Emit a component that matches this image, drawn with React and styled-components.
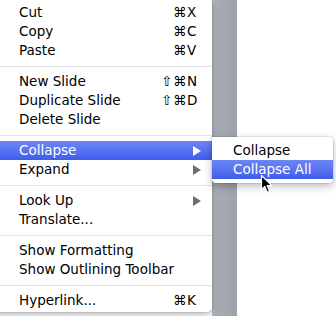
import React from 'react';
import styled, { createGlobalStyle } from 'styled-components';

const GlobalStyle = createGlobalStyle`
  html, body {
    margin: 0;
    padding: 0;
    background: #ffffff;
  }
  body {
    font-family: "DejaVu Sans", "Noto Sans", sans-serif;
  }
`;

const Screen = styled.div`
  position: relative;
  width: 336px;
  height: 316px;
  overflow: hidden;
  display: flex;
  background: #ffffff;
`;

const WindowArea = styled.div`
  flex: 0 0 212px;
  background: #ffffff;
`;

const WindowEdge = styled.div`
  flex: 0 0 25px;
  background: linear-gradient(90deg, #b5b9c1 0%, #a6aab2 30%, #9ea2ab 100%);
`;

const Desk = styled.div`
  flex: 1;
  background: #ffffff;
`;

const Menu = styled.div`
  position: absolute;
  left: ${(p) => p.$left}px;
  top: ${(p) => p.$top}px;
  width: ${(p) => p.$width}px;
  padding: 4px 0 ${(p) => p.$bottom}px;
  background: #ffffff;
  border-radius: ${(p) => p.$radius};
  box-shadow: 0 3px 8px rgba(0, 0, 0, 0.28), 0 0 0 1px rgba(0, 0, 0, 0.08);
  font-size: 13.5px;
  color: #000000;
  z-index: ${(p) => p.$z};
`;

const Row = styled.div`
  display: flex;
  align-items: center;
  height: 19px;
  line-height: 19px;
  padding: 0 ${(p) => p.$right}px 0 ${(p) => p.$left}px;
  color: ${(p) => (p.$active ? '#ffffff' : '#000000')};
  background: ${(p) =>
    p.$active ? 'linear-gradient(180deg, #6c85f5 0%, #5a75f1 45%, #3e5cea 100%)' : 'transparent'};
  white-space: nowrap;
`;

const Label = styled.span`
  flex: 1;
`;

const Shortcut = styled.span`
  display: flex;
  align-items: center;
`;

const Modifiers = styled.span`
  letter-spacing: 0.5px;
`;

const Key = styled.span`
  display: inline-block;
  width: 11px;
  text-align: left;
`;

const Arrow = styled.span`
  width: 0;
  height: 0;
  margin-right: -3px;
  border-top: 5px solid transparent;
  border-bottom: 5px solid transparent;
  border-left: 8px solid ${(p) => (p.$active ? '#ffffff' : '#6e6e6e')};
`;

const Separator = styled.div`
  height: 12px;
  display: flex;
  align-items: center;
  &::after {
    content: '';
    flex: 1;
    height: 1px;
    background: #e2e2e2;
  }
`;

const Cursor = styled.svg`
  position: absolute;
  left: 260px;
  top: 174px;
  z-index: 5;
`;

const mainItems = [
  { label: 'Cut', mods: '⌘', key: 'X' },
  { label: 'Copy', mods: '⌘', key: 'C' },
  { label: 'Paste', mods: '⌘', key: 'V' },
  { sep: true },
  { label: 'New Slide', mods: '⇧⌘', key: 'N' },
  { label: 'Duplicate Slide', mods: '⇧⌘', key: 'D' },
  { label: 'Delete Slide' },
  { sep: true },
  { label: 'Collapse', sub: true, active: true },
  { label: 'Expand', sub: true },
  { sep: true },
  { label: 'Look Up', sub: true },
  { label: 'Translate...' },
  { sep: true },
  { label: 'Show Formatting' },
  { label: 'Show Outlining Toolbar' },
  { sep: true },
  { label: 'Hyperlink...', mods: '⌘', key: 'K' },
];

const subItems = [
  { label: 'Collapse' },
  { label: 'Collapse All', active: true },
];

const App = () => {
  return (
    <>
      <GlobalStyle />
      <Screen>
        <WindowArea />
        <WindowEdge />
        <Desk />

        <Menu $left={-6} $top={-1} $width={218} $bottom={2} $radius="0 4px 5px 5px" $z={1}>
          {mainItems.map((item, i) =>
            item.sep ? (
              <Separator key={i} />
            ) : (
              <Row key={i} $left={25} $right={14} $active={item.active}>
                <Label>{item.label}</Label>
                {item.key && (
                  <Shortcut>
                    <Modifiers>{item.mods}</Modifiers>
                    <Key>{item.key}</Key>
                  </Shortcut>
                )}
                {item.sub && <Arrow $active={item.active} />}
              </Row>
            )
          )}
        </Menu>

        <Menu $left={212} $top={137} $width={121} $bottom={4} $radius="0 4px 4px 4px" $z={2}>
          {subItems.map((item, i) => (
            <Row key={i} $left={21} $right={8} $active={item.active}>
              <Label>{item.label}</Label>
            </Row>
          ))}
        </Menu>

        <Cursor width="14" height="20" viewBox="0 0 14 20">
          <path
            d="M1.5 1.5 L1.5 15.5 L4.8 12.4 L7.3 18.2 L9.6 17.2 L7.2 11.6 L11.8 11.6 Z"
            fill="#000000"
            stroke="#ffffff"
            strokeWidth="1.2"
            strokeLinejoin="round"
          />
        </Cursor>
      </Screen>
    </>
  );
};

export default App;
